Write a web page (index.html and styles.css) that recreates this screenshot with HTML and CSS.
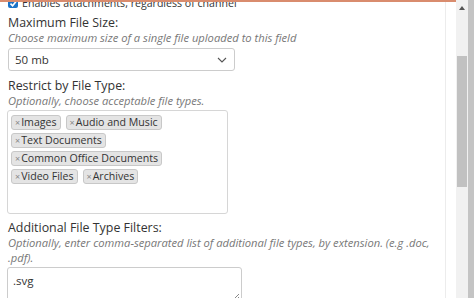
FILE: index.html
```html
<!DOCTYPE html>
<html lang="en">
<head>
  <meta charset="UTF-8">
  <title>Attachment settings</title>
  <link rel="stylesheet" href="styles.css">
</head>
<body>
  <div class="top-bar"></div>
  <div class="frame">
    <div class="content">
      <div class="check-row">
        <span class="checkbox">
          <svg width="9" height="9" viewBox="0 0 9 9"><path d="M1.5 4.6 L3.6 6.7 L7.6 1.8" fill="none" stroke="#fff" stroke-width="1.6"/></svg>
        </span>
        Enables attachments, regardless of channel
      </div>

      <div class="field first">
        <div class="label">Maximum File Size:</div>
        <div class="hint">Choose maximum size of a single file uploaded to this field</div>
        <div class="select">
          <span>50 mb</span>
          <svg width="10" height="6" viewBox="0 0 10 6"><path d="M1 1 L5 5 L9 1" fill="none" stroke="#555" stroke-width="1.1"/></svg>
        </div>
      </div>

      <div class="field">
        <div class="label">Restrict by File Type:</div>
        <div class="hint">Optionally, choose acceptable file types.</div>
        <div class="multi">
          <span class="tag"><i>×</i>Images</span>
          <span class="tag"><i>×</i>Audio and Music</span>
          <span class="tag"><i>×</i>Text Documents</span>
          <span class="tag"><i>×</i>Common Office Documents</span>
          <span class="tag"><i>×</i>Video Files</span>
          <span class="tag"><i>×</i>Archives</span>
        </div>
      </div>

      <div class="field last">
        <div class="label">Additional File Type Filters:</div>
        <div class="hint">Optionally, enter comma-separated list of additional file types, by extension. (e.g .doc, .pdf).</div>
        <div class="textarea">
          .svg
          <svg class="grip" width="7" height="7" viewBox="0 0 7 7"><path d="M6 1 L1 6 M6 4 L4 6" stroke="#888" stroke-width="1"/></svg>
        </div>
      </div>
    </div>
    <div class="scroll">
      <div class="track">
        <div class="arrow"></div>
        <div class="thumb"></div>
      </div>
      <div class="edge"></div>
    </div>
  </div>
</body>
</html>
```

FILE: styles.css
```css
body {
  margin: 0;
  font-family: "Open Sans", sans-serif;
  font-size: 12px;
  color: #333;
  background: #fff;
  overflow: hidden;
}
.top-bar {
  position: absolute;
  top: 0;
  left: 0;
  width: 468px;
  height: 2px;
  background: #d98c6e;
}
.frame {
  display: flex;
  height: 298px;
  overflow: hidden;
}
.content {
  width: 437px;
  padding-left: 8px;
  border-right: 1px solid #ececec;
}
.check-row {
  display: flex;
  align-items: center;
  gap: 4px;
  margin-top: -4px;
  height: 14px;
  font-size: 10.6px;
}
.checkbox {
  display: inline-flex;
  align-items: center;
  justify-content: center;
  width: 10px;
  height: 10px;
  border-radius: 2px;
  background: #1a73c8;
}
.field {
  margin-top: 8px;
}
.field.first {
  margin-top: 6px;
}
.field.last {
  margin-top: 7px;
}
.label {
  font-size: 12.4px;
  line-height: 14px;
  color: #333;
}
.hint {
  font-style: italic;
  font-size: 11.2px;
  line-height: 15px;
  color: #777;
  width: 432px;
}
.select {
  display: flex;
  justify-content: space-between;
  align-items: center;
  width: 212px;
  height: 21px;
  margin-top: 3px;
  padding: 0 7px 0 6px;
  border: 1px solid #ccc;
  border-radius: 3px;
  font-size: 11.5px;
}
.multi {
  display: flex;
  flex-wrap: wrap;
  align-content: flex-start;
  gap: 3px 5px;
  width: 216px;
  height: 98px;
  margin-top: 2px;
  margin-left: -1px;
  padding: 4px 0 0 3px;
  border: 1px solid #d6d6d6;
  border-radius: 3px;
}
.tag {
  display: flex;
  align-items: center;
  height: 13px;
  padding: 0 3px;
  background: #e4e4e4;
  border: 1px solid #c8c8c8;
  border-radius: 3px;
  font-size: 10.6px;
  line-height: 13px;
  color: #333;
}
.tag i {
  font-style: normal;
  color: #888;
  font-size: 9px;
  margin-right: 1px;
}
.textarea {
  position: relative;
  width: 228px;
  height: 40px;
  margin-top: 2px;
  margin-left: -1px;
  padding: 6px 0 0 5px;
  border: 1px solid #ccc;
  border-radius: 3px;
  font-size: 11.5px;
  line-height: 14px;
}
.grip {
  position: absolute;
  right: 1px;
  top: 25px;
}
.scroll {
  display: flex;
  margin-left: 10px;
}
.track {
  position: relative;
  width: 12px;
  background: #f1f1f1;
}
.arrow {
  margin: 6px auto 0;
  width: 0;
  height: 0;
  border-left: 3px solid transparent;
  border-right: 3px solid transparent;
  border-bottom: 4px solid #555;
}
.thumb {
  position: absolute;
  top: 56px;
  left: 1px;
  width: 10px;
  height: 131px;
  background: #c1c1c1;
}
.edge {
  width: 6px;
  background: #c4c4c4;
}
```
